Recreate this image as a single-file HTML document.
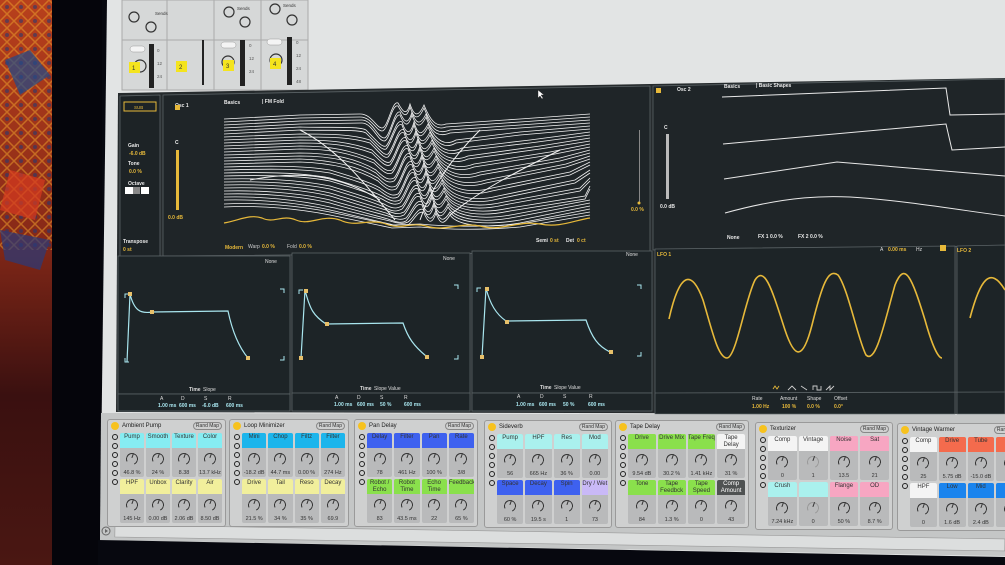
<!DOCTYPE html>
<html><head><meta charset="utf-8"><style>
*{margin:0;padding:0;box-sizing:border-box}
body{width:1005px;height:565px;overflow:hidden;background:#07080f;font-family:"Liberation Sans",sans-serif;position:relative}
.dev{position:absolute;background:#cfd0d0;border:1px solid #9a9a9a;border-radius:3px;height:108px}
.dh{height:12px;font-size:6px;line-height:12px;padding-left:14px;color:#222;position:relative}
.dh:before{content:"";position:absolute;left:3px;top:2px;width:8px;height:8px;border-radius:50%;background:#f7c21e}
.dh i{position:absolute;right:3px;top:2px;font-style:normal;font-size:5px;color:#333;border:1px solid #888;border-radius:4px;padding:0 2px;line-height:6px}
.lc{position:absolute;left:3px;top:14px;width:8px}
.lc b{display:block;width:6px;height:6px;border-radius:50%;border:1px solid #222;margin:0 0 3px 1px}
.grid{position:absolute;left:12px;right:3px;top:13px;bottom:3px;display:grid;grid-template-columns:repeat(4,1fr);grid-template-rows:1fr 1fr;gap:2px}
.c{background:#b9babb;border-radius:2px;position:relative;overflow:hidden}
.c .l{height:15px;font-size:6px;color:#333;text-align:center;line-height:7px;padding-top:1px}
.c .k{position:absolute;left:50%;top:20px;width:12px;height:12px;margin-left:-6px;border-radius:50%;border:1.3px solid #333;border-bottom-color:transparent;transform:rotate(20deg)}
.c .k:after{content:"";position:absolute;left:4px;top:-1px;width:1.3px;height:5px;background:#333}
.c .v{position:absolute;bottom:1px;width:100%;text-align:center;font-size:5.5px;color:#333}
.cy{background:#86ecf2}.ye{background:#f1ef9c}.bl{background:#1cb5ec}.db{background:#3e61ef}.gr{background:#8ae04c}.lc2{background:#aaf1ee}.wh{background:#f4f4f4}.pk{background:#f7a6c2}.or{background:#f46b4d}.mb{background:#1a84ee}.lv{background:#c9b9f7}.gy{background:#4f5252;color:#fff!important}
svg text{font-family:"Liberation Sans",sans-serif}
</style></head><body>
<svg width="1005" height="565" style="position:absolute;left:0;top:0">
<defs>
<linearGradient id="rug" x1="0" y1="0" x2="0" y2="1"><stop offset="0" stop-color="#b8401c"/><stop offset="0.4" stop-color="#8a2a18"/><stop offset="0.7" stop-color="#3a1010"/><stop offset="1" stop-color="#4a1712"/></linearGradient>
<pattern id="rp" width="14" height="14" patternUnits="userSpaceOnUse"><path d="M0 7 L7 0 L14 7 L7 14Z" fill="none" stroke="#e89a2a" stroke-width="1.5"/><circle cx="7" cy="7" r="2" fill="#1e3a78"/></pattern>
</defs>
<rect x="0" y="0" width="54" height="565" fill="url(#rug)"/>
<rect x="0" y="0" width="54" height="250" fill="url(#rp)" opacity="0.55"/>
<g opacity="0.7">
<path d="M5 60 L30 50 L50 75 L20 95Z" fill="#1f4a8a"/>
<path d="M10 170 L45 180 L35 220 L0 210Z" fill="#d63a20"/>
<path d="M0 230 L50 240 L40 270 L5 260Z" fill="#2a3a7a"/>
</g>
<rect x="52" y="0" width="50" height="565" fill="#05050b"/>
<!-- screen -->
<polygon points="107,0 1005,0 1005,560 100,545" fill="#e2e4e4"/>
<!-- mixer -->
<rect x="122" y="0" width="186" height="90" fill="#d6d8d8" stroke="#aaa"/>
<line x1="122" y1="40" x2="308" y2="40" stroke="#aaa"/>
<line x1="167" y1="0" x2="167" y2="90" stroke="#aaa"/><line x1="214" y1="0" x2="214" y2="90" stroke="#aaa"/><line x1="261" y1="0" x2="261" y2="90" stroke="#aaa"/>
<g fill="none" stroke="#333" stroke-width="1.2">
<circle cx="134" cy="17" r="5"/><circle cx="151" cy="27" r="5"/><circle cx="229" cy="12" r="5"/><circle cx="245" cy="22" r="5"/><circle cx="275" cy="9" r="5"/><circle cx="292" cy="20" r="5"/>
<circle cx="140" cy="66" r="6"/><circle cx="228" cy="62" r="6"/><circle cx="276" cy="60" r="6"/>
</g>
<g font-size="4.5" fill="#333"><text x="155" y="15">Sends</text><text x="237" y="10">Sends</text><text x="283" y="7">Sends</text></g>
<rect x="130" y="46" width="15" height="6" rx="3" fill="#f4f4f4" stroke="#999" stroke-width=".5"/><rect x="221" y="42" width="15" height="6" rx="3" fill="#f4f4f4" stroke="#999" stroke-width=".5"/><rect x="267" y="39" width="15" height="6" rx="3" fill="#f4f4f4" stroke="#999" stroke-width=".5"/>
<rect x="149" y="44" width="5" height="44" fill="#222"/><rect x="202" y="40" width="2" height="45" fill="#222"/><rect x="240" y="40" width="5" height="46" fill="#222"/><rect x="287" y="37" width="5" height="48" fill="#222"/>
<g fill="#f4e41e"><rect x="129" y="62" width="11" height="11"/><rect x="176" y="61" width="11" height="11"/><rect x="223" y="60" width="11" height="11"/><rect x="270" y="58" width="11" height="11"/></g>
<g font-size="6" fill="#333"><text x="132" y="70">1</text><text x="179" y="69">2</text><text x="226" y="68">3</text><text x="273" y="66">4</text></g>
<g font-size="4.5" fill="#555"><text x="157" y="52">0</text><text x="157" y="65">12</text><text x="157" y="78">24</text><text x="249" y="47">0</text><text x="249" y="60">12</text><text x="249" y="73">24</text><text x="296" y="44">0</text><text x="296" y="57">12</text><text x="296" y="70">24</text><text x="296" y="83">48</text></g>
<!-- dark device area -->
<polygon points="118,93 1005,78 1005,414 116,412" fill="#262b2d"/>
<polygon points="120,96 160,95 160,256 120,257" fill="#1d2326" stroke="#5b6366" stroke-width=".8"/>
<polygon points="163,95 650,86 650,252 163,256" fill="#1f2528" stroke="#5b6366" stroke-width=".8"/>
<polygon points="653,86 1005,79 1005,246 653,250" fill="#1f2528" stroke="#5b6366" stroke-width=".8"/>
<rect x="124" y="102" width="32" height="9" fill="none" stroke="#e7b93a"/><text x="134" y="109" font-size="4.5" fill="#e7b93a">SUB</text>
<g font-size="5" fill="#e8e8e8" font-weight="bold"><text x="128" y="147">Gain</text><text x="128" y="165">Tone</text><text x="128" y="185">Octave</text><text x="123" y="243">Transpose</text><text x="175" y="107">Osc 1</text><text x="224" y="104">Basics</text><text x="262" y="103">| FM Fold</text><text x="677" y="91">Osc 2</text><text x="724" y="88">Basics</text><text x="756" y="87">| Basic Shapes</text>
<text x="121" y="265">Amp</text><text x="294" y="262">Env 2</text><text x="474" y="258">Env 3</text><text x="536" y="242">Semi</text><text x="566" y="242">Det</text></g>
<g font-size="5" fill="#e7b93a" font-weight="bold"><text x="129" y="155">-6.0 dB</text><text x="129" y="173">0.0 %</text><text x="123" y="251">0 st</text><text x="168" y="219">0.0 dB</text><text x="225" y="249">Modern</text><text x="262" y="248">0.0 %</text><text x="299" y="248">0.0 %</text><text x="550" y="242">0 st</text><text x="577" y="242">0 ct</text><text x="631" y="211">0.0 %</text><text x="175" y="144" fill="#eee">C</text></g>
<g font-size="5" fill="#ccc"><text x="248" y="248">Warp</text><text x="287" y="248">Fold</text></g>
<rect x="175" y="105" width="5" height="5" fill="#e7b93a"/><rect x="656" y="88" width="5" height="5" fill="#e7b93a"/>
<rect x="176" y="150" width="3" height="60" fill="#e7b93a"/><rect x="639" y="130" width="1" height="74" fill="#888"/><circle cx="639" cy="203" r="1.5" fill="#e7b93a"/>
<rect x="125" y="187" width="8" height="7" fill="#fff"/><rect x="133" y="187" width="7" height="7" fill="#888"/><rect x="141" y="187" width="8" height="7" fill="#fff"/>
<!-- waveform -->
<g id="wv" fill="none" stroke="#f2f2f2" stroke-width=".8">
<path d="M224 119 L300 115 L360 114 C372 114 376 128 382 128 C388 128 392 100 398 103 C402 110 406 118 410 104 C414 116 418 118 424 105 C430 120 436 128 446 124 L520 119 L590 114"/>
<path d="M224 125 L300 121 L362 120 C372 120 378 138 384 138 C390 138 394 110 400 112 C404 122 408 126 412 112 C416 124 420 126 426 114 C432 132 440 134 450 130 L520 125 L590 120"/>
<path d="M224 131 L300 127 C330 128 360 126 366 130 C376 140 382 148 386 146 C392 140 396 118 402 122 C406 134 410 136 414 122 C418 136 422 136 428 124 C436 142 446 146 456 140 L520 132 L590 126"/>
<path d="M224 137 L300 134 C330 134 350 134 370 140 C380 150 384 156 388 154 C394 148 398 126 404 130 C408 142 412 144 416 130 C420 144 424 144 430 132 C438 150 450 154 462 148 L530 140 L590 132"/>
<path d="M224 143 L300 140 C330 140 350 142 372 150 C382 160 386 164 390 162 C396 156 400 134 406 138 C410 150 414 152 418 138 C422 152 426 152 432 140 C440 158 454 162 468 156 L540 146 L590 138"/>
<path d="M224 149 L300 146 C330 146 350 150 374 160 C384 170 388 172 392 170 C398 164 402 142 408 146 C412 158 416 160 420 146 C424 160 428 160 434 148 C442 166 458 170 474 164 L550 152 L590 144"/>
<path d="M224 155 L300 153 C330 153 356 158 376 170 C386 180 390 180 394 178 C400 172 404 150 410 154 C414 166 418 168 422 154 C426 168 430 168 436 156 C444 174 462 178 480 172 L560 158 L590 150"/>
<path d="M224 161 L300 159 C330 160 358 166 378 178 C388 188 392 188 396 186 C402 180 406 158 412 162 C416 174 420 176 424 162 C428 176 432 176 438 164 C446 182 466 186 486 180 L566 164 L590 156"/>
<path d="M224 167 C260 166 300 165 330 170 C350 176 370 182 380 188 C390 196 394 196 398 194 C404 188 408 166 414 170 C418 182 422 184 426 170 C430 184 434 184 440 172 C448 190 470 194 492 188 L570 172 L590 162"/>
<path d="M224 173 C260 172 300 172 330 178 C350 184 370 190 382 196 C392 202 396 202 400 200 C406 194 410 174 416 178 C420 190 424 192 428 178 C432 192 436 192 442 180 C450 198 474 202 498 196 L575 180 L590 170"/>
<path d="M224 179 C260 178 300 180 330 186 C350 192 370 198 384 204 C394 210 398 208 402 206 C408 200 412 182 418 186 C422 198 426 200 430 186 C434 200 438 200 444 188 C452 206 478 208 504 202 L580 188 L590 178"/>
<path d="M224 185 C260 184 300 186 330 193 C350 199 372 206 386 210 C396 215 400 214 404 212 C410 206 414 190 420 194 C424 206 428 208 432 194 C436 208 440 208 446 196 C454 212 482 214 510 208 L585 196 L590 186"/>
<path d="M224 191 C260 190 300 193 330 200 C350 206 374 212 388 216 C398 220 402 220 406 218 C412 212 416 198 422 202 C426 214 430 216 434 202 C438 216 442 216 448 204 C456 218 486 220 516 214 L590 200"/>
<path d="M224 197 C260 196 300 200 330 207 C352 212 376 218 390 221 C400 224 404 224 408 222 C414 218 418 206 424 210 C428 220 432 222 436 210 C440 222 444 222 450 212 C458 224 490 225 520 220 L590 206"/>
<path d="M224 204 C260 202 300 206 330 212 C354 217 378 222 392 225 L420 224 C440 226 470 228 520 224 L590 212"/>
</g>
<use href="#wv" transform="translate(0,3)"/>
<g fill="none" stroke="#f2f2f2" stroke-width="1"><path d="M300 130 C340 150 370 190 395 220 M480 130 C450 160 430 190 420 220 M250 180 C300 170 340 175 380 200 M560 150 C520 170 480 190 450 215"/></g>
<path d="M224 223 C240 220 250 214 262 218 C274 224 282 214 296 220 C310 226 322 214 340 220 C356 228 368 218 386 224 C400 230 410 222 426 226 C446 232 460 222 480 226 C500 232 520 220 540 224 C560 228 575 220 590 218" fill="none" stroke="#e7b93a" stroke-width="1.2"/>
<!-- Osc2 shapes -->
<g fill="none" stroke="#e8e8e8" stroke-width="1">
<path d="M722 97 L946 88 L950 115 L1005 114"/><path d="M723 144 L946 124 L952 150 L1005 147"/><path d="M724 179 L837 162 L1005 176"/><path d="M725 213 C790 195 830 196 850 197 C900 200 960 210 1005 216"/>
</g>
<g font-size="5" fill="#e8e8e8" font-weight="bold"><text x="664" y="129">C</text><text x="660" y="208">0.0 dB</text><text x="727" y="239">None</text><text x="758" y="238">FX 1 0.0 %</text><text x="798" y="238">FX 2 0.0 %</text></g>
<rect x="666" y="134" width="3" height="65" fill="#bbb"/>
<!-- second row panels -->
<g fill="#1d2427" stroke="#5b6366" stroke-width=".8">
<rect x="118" y="256" width="172" height="138"/><rect x="292" y="253" width="178" height="141"/><rect x="472" y="251" width="180" height="142"/>
<rect x="118" y="394" width="172" height="17"/><rect x="292" y="393" width="178" height="18"/><rect x="472" y="393" width="180" height="18"/>
<polygon points="655,249 955,246 955,414 655,414"/><polygon points="957,246 1005,245 1005,414 957,414"/>
</g>
<line x1="655" y1="393" x2="1005" y2="392" stroke="#5b6366" stroke-width=".8"/>
<g font-size="5" fill="#e7b93a" font-weight="bold"><text x="657" y="256">LFO 1</text><text x="957" y="252">LFO 2</text><text x="888" y="251">0.00 ms</text><text x="752" y="408">1.00 Hz</text><text x="782" y="408">100 %</text><text x="807" y="408">0.0 %</text><text x="834" y="408">0.0°</text></g>
<rect x="940" y="245" width="6" height="6" fill="#e7b93a"/>
<g font-size="5" fill="#ddd"><text x="880" y="251">A</text><text x="916" y="251">Hz</text><text x="752" y="400">Rate</text><text x="780" y="400">Amount</text><text x="807" y="400">Shape</text><text x="834" y="400">Offset</text><text x="265" y="263">None</text><text x="443" y="260">None</text><text x="626" y="256">None</text></g>
<path d="M669 319 C680 270 692 270 703 300 C712 330 718 358 727 358 C736 358 745 300 755 280 C765 265 772 290 785 330 C795 360 803 360 812 325 C822 285 828 268 838 275 C848 288 858 340 866 355 C876 365 885 320 895 285 C905 260 912 278 925 320 C932 345 938 358 942 358" fill="none" stroke="#e7b93a" stroke-width="1.6"/>
<path d="M970 318 C980 280 990 265 1005 290" fill="none" stroke="#e7b93a" stroke-width="1.6"/>
<g fill="none" stroke="#e7b93a" stroke-width=".9"><path d="M773 389 l2 -3 l2 3 l2 -3"/></g>
<g fill="none" stroke="#ccc" stroke-width=".9"><path d="M788 390 l4 -4 l4 4 M801 386 l6 4 M813 390 v-4 h4 v4 h4 v-4 M826 390 l4 -4 v4 l4 -4"/></g>
<!-- envelopes -->
<g fill="none" stroke="#a9e6ef" stroke-width="1.2">
<path d="M127 362 L130 294 C134 310 140 314 152 312 L228 311 C232 330 238 346 248 358"/>
<path d="M301 358 L305 290 C310 310 314 316 326 324 L403 323 C408 338 414 346 426 356"/>
<path d="M482 357 L486 288 C490 304 496 314 506 321 L586 320 C592 338 598 346 610 352"/>
</g>
<g fill="none" stroke="#a9e6ef" stroke-width="1"><path d="M125 298 v-4 h4 M125 358 v4 h4 M280 289 h4 v4 M280 360 h4 v-4 M299 294 v-4 h4 M454 285 h4 v4 M454 359 h4 v-4 M477 292 v-4 h4 M637 285 h4 v4 M637 356 h4 v-4"/></g>
<g fill="#e7c06a"><rect x="128" y="292" width="4" height="4"/><rect x="150" y="310" width="4" height="4"/><rect x="246" y="356" width="4" height="4"/><rect x="304" y="289" width="4" height="4"/><rect x="325" y="322" width="4" height="4"/><rect x="425" y="355" width="4" height="4"/><rect x="299" y="356" width="4" height="4"/><rect x="485" y="287" width="4" height="4"/><rect x="505" y="320" width="4" height="4"/><rect x="609" y="350" width="4" height="4"/><rect x="480" y="355" width="4" height="4"/></g>
<g font-size="5" fill="#ddd"><text x="189" y="391" font-weight="bold">Time</text><text x="203" y="391">Slope</text><text x="360" y="390" font-weight="bold">Time</text><text x="374" y="390">Slope Value</text><text x="540" y="389" font-weight="bold">Time</text><text x="554" y="389">Slope Value</text>
<text x="160" y="400">A</text><text x="181" y="400">D</text><text x="204" y="400">S</text><text x="228" y="400">R</text><text x="335" y="399">A</text><text x="357" y="399">D</text><text x="380" y="399">S</text><text x="404" y="399">R</text><text x="517" y="398">A</text><text x="540" y="398">D</text><text x="563" y="398">S</text><text x="589" y="398">R</text></g>
<g font-size="5" fill="#a9e6ef" font-weight="bold"><text x="158" y="407">1.00 ms</text><text x="179" y="407">600 ms</text><text x="202" y="407">-6.0 dB</text><text x="226" y="407">600 ms</text><text x="334" y="406">1.00 ms</text><text x="357" y="406">600 ms</text><text x="380" y="406">50 %</text><text x="404" y="406">600 ms</text><text x="516" y="406">1.00 ms</text><text x="539" y="406">600 ms</text><text x="563" y="406">50 %</text><text x="588" y="406">600 ms</text></g>
<path d="M538 90 l0 8 l2 -2 l2 3 l1 -1 l-2 -3 l3 0z" fill="#fff" stroke="#222" stroke-width=".4"/>
<!-- rack bg -->
<polygon points="101,413 1005,415 1005,556 100,540" fill="#c4c6c6"/>
<rect x="115" y="525" width="890" height="12" fill="#dcdede" stroke="#999" stroke-width=".6" transform="rotate(0.9 115 525)"/>
<circle cx="106" cy="531" r="4" fill="none" stroke="#666"/>
<polygon points="105,529 105,533 108,531" fill="#666"/>
<polygon points="98,540 1005,557 1005,565 98,565" fill="#07080f"/>
</svg>

<div class="dev" style="left:107px;top:419px;width:119px"><div class="dh">Ambient Pump<i>Rand Map</i></div><div class="lc"><b></b><b></b><b></b><b></b><b></b><b></b></div><div class="grid">
<div class="c"><div class="l cy">Pump</div><div class="k"></div><div class="v">46.8 %</div></div><div class="c"><div class="l cy">Smooth</div><div class="k"></div><div class="v">24 %</div></div><div class="c"><div class="l cy">Texture</div><div class="k"></div><div class="v">8.38</div></div><div class="c"><div class="l cy">Color</div><div class="k"></div><div class="v">13.7 kHz</div></div>
<div class="c"><div class="l ye">HPF</div><div class="k"></div><div class="v">145 Hz</div></div><div class="c"><div class="l ye">Unbox</div><div class="k"></div><div class="v">0.00 dB</div></div><div class="c"><div class="l ye">Clarity</div><div class="k"></div><div class="v">2.06 dB</div></div><div class="c"><div class="l ye">Air</div><div class="k"></div><div class="v">8.50 dB</div></div></div></div>

<div class="dev" style="left:229px;top:419px;width:120px"><div class="dh">Loop Minimizer<i>Rand Map</i></div><div class="lc"><b></b><b></b><b></b><b></b><b></b><b></b></div><div class="grid">
<div class="c"><div class="l bl">Mini</div><div class="k"></div><div class="v">-18.2 dB</div></div><div class="c"><div class="l bl">Chop</div><div class="k"></div><div class="v">44.7 ms</div></div><div class="c"><div class="l bl">Filtz</div><div class="k"></div><div class="v">0.00 %</div></div><div class="c"><div class="l bl">Filter</div><div class="k"></div><div class="v">274 Hz</div></div>
<div class="c"><div class="l ye">Drive</div><div class="k"></div><div class="v">21.5 %</div></div><div class="c"><div class="l ye">Tail</div><div class="k"></div><div class="v">34 %</div></div><div class="c"><div class="l ye">Reso</div><div class="k"></div><div class="v">35 %</div></div><div class="c"><div class="l ye">Decay</div><div class="k"></div><div class="v">69.9</div></div></div></div>

<div class="dev" style="left:354px;top:419px;width:124px"><div class="dh">Pan Delay<i>Rand Map</i></div><div class="lc"><b></b><b></b><b></b><b></b><b></b><b></b></div><div class="grid">
<div class="c"><div class="l db">Delay</div><div class="k"></div><div class="v">78</div></div><div class="c"><div class="l db">Filter</div><div class="k"></div><div class="v">461 Hz</div></div><div class="c"><div class="l db">Pan</div><div class="k"></div><div class="v">100 %</div></div><div class="c"><div class="l db">Rate</div><div class="k"></div><div class="v">3/8</div></div>
<div class="c"><div class="l gr">Robot / Echo</div><div class="k"></div><div class="v">83</div></div><div class="c"><div class="l gr">Robot Time</div><div class="k"></div><div class="v">43.5 ms</div></div><div class="c"><div class="l gr">Echo Time</div><div class="k"></div><div class="v">22</div></div><div class="c"><div class="l gr">Feedback</div><div class="k"></div><div class="v">65 %</div></div></div></div>

<div class="dev" style="left:484px;top:420px;width:128px"><div class="dh">Sideverb<i>Rand Map</i></div><div class="lc"><b></b><b></b><b></b><b></b><b></b><b></b></div><div class="grid">
<div class="c"><div class="l lc2">Pump</div><div class="k"></div><div class="v">56</div></div><div class="c"><div class="l lc2">HPF</div><div class="k"></div><div class="v">665 Hz</div></div><div class="c"><div class="l lc2">Res</div><div class="k"></div><div class="v">36 %</div></div><div class="c"><div class="l lc2">Mod</div><div class="k"></div><div class="v">0.00</div></div>
<div class="c"><div class="l db">Space</div><div class="k"></div><div class="v">60 %</div></div><div class="c"><div class="l db">Decay</div><div class="k"></div><div class="v">19.5 s</div></div><div class="c"><div class="l db">Spin</div><div class="k"></div><div class="v">1</div></div><div class="c"><div class="l lv">Dry / Wet</div><div class="k"></div><div class="v">73</div></div></div></div>

<div class="dev" style="left:615px;top:420px;width:134px"><div class="dh">Tape Delay<i>Rand Map</i></div><div class="lc"><b></b><b></b><b></b><b></b><b></b><b></b></div><div class="grid">
<div class="c"><div class="l gr">Drive</div><div class="k"></div><div class="v">9.54 dB</div></div><div class="c"><div class="l gr">Drive Mix</div><div class="k"></div><div class="v">30.2 %</div></div><div class="c"><div class="l gr">Tape Freq</div><div class="k"></div><div class="v">1.41 kHz</div></div><div class="c"><div class="l wh">Tape Delay</div><div class="k"></div><div class="v">31 %</div></div>
<div class="c"><div class="l gr">Tone</div><div class="k"></div><div class="v">84</div></div><div class="c"><div class="l gr">Tape Feedbck</div><div class="k"></div><div class="v">1.3 %</div></div><div class="c"><div class="l gr">Tape Speed</div><div class="k"></div><div class="v">0</div></div><div class="c"><div class="l gy">Comp Amount</div><div class="k"></div><div class="v">43</div></div></div></div>

<div class="dev" style="left:755px;top:422px;width:138px"><div class="dh">Texturizer<i>Rand Map</i></div><div class="lc"><b></b><b></b><b></b><b></b><b></b><b></b></div><div class="grid">
<div class="c"><div class="l wh">Comp</div><div class="k"></div><div class="v">0</div></div><div class="c"><div class="l wh">Vintage</div><div class="k" style="border-color:#999;border-bottom-color:transparent"></div><div class="v">1</div></div><div class="c"><div class="l pk">Noise</div><div class="k"></div><div class="v">13.5</div></div><div class="c"><div class="l pk">Sat</div><div class="k"></div><div class="v">21</div></div>
<div class="c"><div class="l lc2">Crush</div><div class="k"></div><div class="v">7.24 kHz</div></div><div class="c"><div class="l lc2"></div><div class="k" style="border-color:#999;border-bottom-color:transparent"></div><div class="v">0</div></div><div class="c"><div class="l pk">Flange</div><div class="k"></div><div class="v">50 %</div></div><div class="c"><div class="l pk">OD</div><div class="k"></div><div class="v">8.7 %</div></div></div></div>

<div class="dev" style="left:897px;top:423px;width:130px"><div class="dh">Vintage Warmer<i>Rand Map</i></div><div class="lc"><b></b><b></b><b></b><b></b><b></b><b></b></div><div class="grid">
<div class="c"><div class="l wh">Comp</div><div class="k"></div><div class="v">25</div></div><div class="c"><div class="l or">Drive</div><div class="k"></div><div class="v">5.75 dB</div></div><div class="c"><div class="l or">Tube</div><div class="k"></div><div class="v">-15.0 dB</div></div><div class="c"><div class="l or"></div><div class="k"></div><div class="v"></div></div>
<div class="c"><div class="l wh">HPF</div><div class="k"></div><div class="v">0</div></div><div class="c"><div class="l mb">Low</div><div class="k"></div><div class="v">1.6 dB</div></div><div class="c"><div class="l mb">Mid</div><div class="k"></div><div class="v">2.4 dB</div></div><div class="c"><div class="l mb"></div><div class="k"></div><div class="v"></div></div></div></div>
</body></html>
